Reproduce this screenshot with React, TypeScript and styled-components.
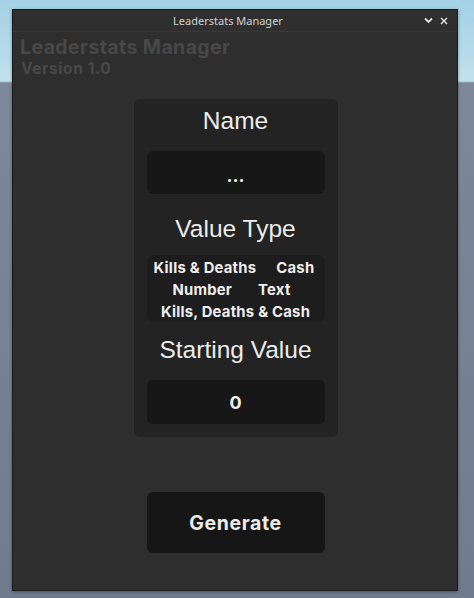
import React from "react";
import styled, { createGlobalStyle } from "styled-components";

const Global = createGlobalStyle`
  html, body { margin: 0; padding: 0; }
  body {
    width: 474px;
    height: 598px;
    overflow: hidden;
    background: linear-gradient(to bottom, #a4d1e5 0%, #b8dcea 60px, #c3e2ee 81px, #7e889b 83px, #717b8f 598px);
    font-family: "Liberation Sans", Arial, sans-serif;
  }
`;

const Scene = styled.div`
  width: 474px;
  height: 598px;
  box-sizing: border-box;
  padding: 9px 16px 7px 12px;
  display: flex;
`;

const Window = styled.div`
  flex: 1;
  display: flex;
  flex-direction: column;
  background: #2e2e2e;
  border: 1px solid #1b1b1b;
  box-shadow: 0 1px 3px rgba(0, 0, 0, 0.35);
`;

const TitleBar = styled.div`
  height: 21px;
  flex: none;
  position: relative;
  display: flex;
  align-items: center;
  justify-content: center;
  border-bottom: 1px solid #383838;
  background: #2f2f2f;
`;

const TitleText = styled.span`
  font-family: "Noto Sans", "Open Sans", sans-serif;
  font-size: 11px;
  color: #d2d2d2;
  margin-left: -14px;
`;

const TitleControls = styled.div`
  position: absolute;
  right: 9px;
  top: 0;
  height: 100%;
  display: flex;
  align-items: center;
  gap: 7px;
`;

const Body = styled.div`
  flex: 1;
  display: flex;
  flex-direction: column;
  padding: 4px 0 0 0;
`;

const Header = styled.div`
  padding-left: 7px;
  display: flex;
  flex-direction: column;
  font-family: Inter, "Noto Sans", sans-serif;
  font-weight: 700;
  color: #484848;
`;

const HeaderTitle = styled.div`
  font-size: 19.5px;
  line-height: 23px;
  letter-spacing: 0.4px;
`;

const HeaderVersion = styled.div`
  font-size: 15.5px;
  line-height: 19px;
  padding-left: 1px;
  letter-spacing: 0.6px;
`;

const Panel = styled.div`
  align-self: center;
  width: 204px;
  margin-top: 21px;
  margin-left: 1px;
  box-sizing: border-box;
  padding: 0 13px 13px;
  background: #232323;
  border-radius: 6px;
  display: flex;
  flex-direction: column;
`;

const Label = styled.div<{ $top: number; $bottom: number }>`
  height: 44px;
  line-height: 44px;
  margin-top: ${(p) => p.$top}px;
  margin-bottom: ${(p) => p.$bottom}px;
  text-align: center;
  font-family: "Liberation Sans", Arial, sans-serif;
  font-size: 24.5px;
  color: #ececec;
`;

const Field = styled.div<{ $h: number; $drop: number }>`
  height: ${(p) => p.$h}px;
  box-sizing: border-box;
  padding-top: ${(p) => p.$drop}px;
  background: #171717;
  border-radius: 6px;
  display: flex;
  align-items: center;
  justify-content: center;
  font-family: Inter, "Noto Sans", sans-serif;
  font-weight: 700;
  font-size: 18px;
  color: #eeeeee;
`;

const Options = styled.div`
  height: 67px;
  background: #1d1d1d;
  border-radius: 6px;
  display: flex;
  flex-direction: column;
  justify-content: center;
  gap: 3px;
  padding-top: 3px;
  box-sizing: border-box;
`;

const OptionRow = styled.div<{ $gap: number; $shift: number }>`
  display: flex;
  justify-content: center;
  gap: ${(p) => p.$gap}px;
  margin-left: ${(p) => p.$shift}px;
  height: 20px;
  align-items: center;
`;

const Option = styled.span`
  font-family: Inter, "Noto Sans", sans-serif;
  font-weight: 700;
  font-size: 14.8px;
  letter-spacing: 0.25px;
  color: #efefef;
  white-space: nowrap;
`;

const Footer = styled.div`
  flex: 1;
  display: flex;
  align-items: flex-start;
  justify-content: center;
  padding-top: 55px;
`;

const GenerateButton = styled.button`
  width: 178px;
  height: 61px;
  margin-left: 1px;
  border: none;
  border-radius: 6px;
  background: #161616;
  font-family: Inter, "Noto Sans", sans-serif;
  font-weight: 700;
  font-size: 19.5px;
  letter-spacing: 0.6px;
  color: #ececec;
  padding: 0;
`;

export default function App() {
  return (
    <>
      <Global />
      <Scene>
        <Window>
          <TitleBar>
            <TitleText>Leaderstats Manager</TitleText>
            <TitleControls>
              <svg width="9" height="7" viewBox="0 0 9 7">
                <path d="M1 1.5 L4.5 5 L8 1.5" stroke="#e6e6e6" strokeWidth="1.8" fill="none" />
              </svg>
              <svg width="8" height="8" viewBox="0 0 8 8">
                <path d="M1 1 L7 7 M7 1 L1 7" stroke="#e6e6e6" strokeWidth="1.4" fill="none" />
              </svg>
            </TitleControls>
          </TitleBar>
          <Body>
            <Header>
              <HeaderTitle>Leaderstats Manager</HeaderTitle>
              <HeaderVersion>Version 1.0</HeaderVersion>
            </Header>
            <Panel>
              <Label $top={0} $bottom={8}>Name</Label>
              <Field $h={43} $drop={5}>...</Field>
              <Label $top={13} $bottom={4}>Value Type</Label>
              <Options>
                <OptionRow $gap={20} $shift={-3}>
                  <Option>Kills &amp; Deaths</Option>
                  <Option>Cash</Option>
                </OptionRow>
                <OptionRow $gap={26} $shift={-8}>
                  <Option>Number</Option>
                  <Option>Text</Option>
                </OptionRow>
                <OptionRow $gap={0} $shift={0}>
                  <Option>Kills, Deaths &amp; Cash</Option>
                </OptionRow>
              </Options>
              <Label $top={6} $bottom={8}>Starting Value</Label>
              <Field $h={44} $drop={0}>0</Field>
            </Panel>
            <Footer>
              <GenerateButton>Generate</GenerateButton>
            </Footer>
          </Body>
        </Window>
      </Scene>
    </>
  );
}
